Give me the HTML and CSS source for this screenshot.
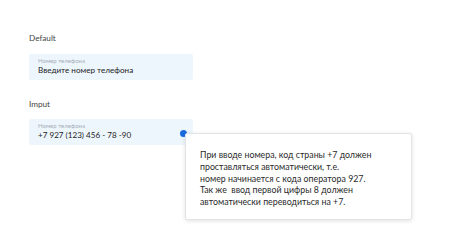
FILE: index.html
```html
<!DOCTYPE html>
<html lang="ru">
<head>
<meta charset="utf-8">
<link rel="stylesheet" href="styles.css">
</head>
<body>
<div class="page">
  <div class="section-label">Default</div>
  <div class="field">
    <div class="field-label">Номер телефона</div>
    <div class="field-value">Введите номер телефона</div>
  </div>
  <div class="section-label second">Imput</div>
  <div class="field anchored">
    <div class="field-label">Номер телефона</div>
    <div class="field-value">+7 927 (123) 456 - 78 -90</div>
    <span class="dot"></span>
    <div class="tooltip">
      При вводе номера, код страны +7 должен<br>
      проставляться автоматически, т.е.<br>
      номер начинается с кода оператора 927.<br>
      Так же&nbsp; ввод первой цифры 8 должен<br>
      автоматически переводиться на +7.
    </div>
  </div>
</div>
</body>
</html>
```
FILE: styles.css
```css
* { box-sizing: border-box; }
html, body { margin: 0; padding: 0; background: #fff; }
body { font-family: "Lato", "Open Sans", sans-serif; color: #333; }
.page { padding: 32px 0 0 29px; width: 474px; height: 251px; }
.section-label { font-size: 8.2px; line-height: 12px; color: #444; margin-bottom: 10px; }
.section-label.second { margin-top: 18px; margin-bottom: 9px; }
.field {
  width: 164px; height: 26px; background: #eef6fd; border-radius: 2px;
  padding: 3px 9px 0;
}
.field-label { font-size: 6px; line-height: 8px; color: #a4adb8; }
.field-value { font-size: 8.1px; line-height: 11px; color: #222; }
.anchored { position: relative; }
.dot {
  position: absolute; left: 150.5px; top: 10.5px; width: 7px; height: 7px;
  border-radius: 50%; background: #1a6be0;
}
.tooltip {
  position: absolute; left: 156px; top: 14px; width: 227px; height: 87px;
  background: #fff; border: 1px solid #e2e4e8; border-radius: 2px;
  box-shadow: 0 1px 4px rgba(0,0,0,0.12);
  padding: 15px 0 0 14px;
  font-size: 8.8px; line-height: 11.8px; color: #2a2a2a; white-space: nowrap;
}
```
